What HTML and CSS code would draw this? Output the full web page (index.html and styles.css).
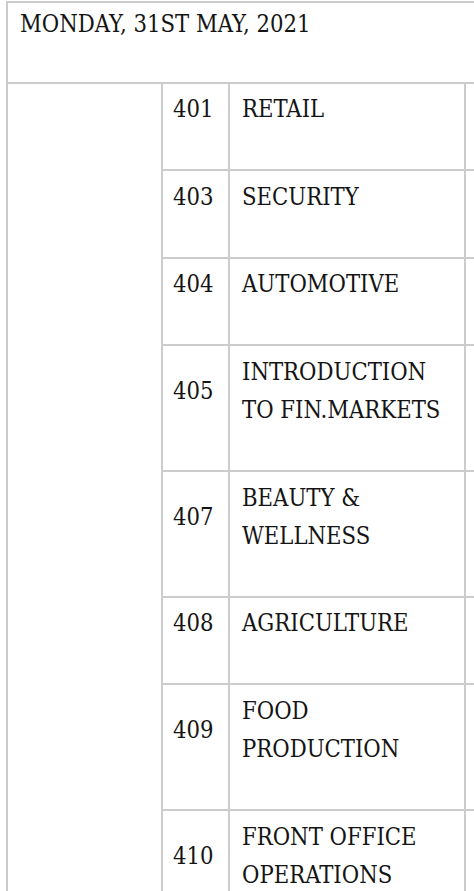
FILE: index.html
```html
<!DOCTYPE html>
<html lang="en">
<head>
<meta charset="utf-8">
<title>Timetable</title>
<link rel="stylesheet" href="styles.css">
</head>
<body>
<div class="wrap">
<table class="tt">
  <colgroup>
    <col class="c-day">
    <col class="c-code">
    <col class="c-name">
    <col class="c-extra">
  </colgroup>
  <tr>
    <td class="head" colspan="4">MONDAY, 31ST MAY, 2021</td>
  </tr>
  <tr>
    <td class="day" rowspan="8"></td>
    <td class="code">401</td>
    <td class="name">RETAIL</td>
    <td class="extra"></td>
  </tr>
  <tr><td class="code">403</td><td class="name">SECURITY</td><td class="extra"></td></tr>
  <tr><td class="code">404</td><td class="name">AUTOMOTIVE</td><td class="extra"></td></tr>
  <tr><td class="code">405</td><td class="name">INTRODUCTION TO FIN.MARKETS</td><td class="extra"></td></tr>
  <tr><td class="code">407</td><td class="name">BEAUTY &amp; WELLNESS</td><td class="extra"></td></tr>
  <tr><td class="code">408</td><td class="name">AGRICULTURE</td><td class="extra"></td></tr>
  <tr><td class="code">409</td><td class="name">FOOD PRODUCTION</td><td class="extra"></td></tr>
  <tr><td class="code">410</td><td class="name">FRONT OFFICE OPERATIONS</td><td class="extra"></td></tr>
</table>
</div>
</body>
</html>
```
FILE: styles.css
```css
html, body {
  margin: 0;
  padding: 0;
  background: #ffffff;
  overflow: hidden;
}
body {
  font-family: "DejaVu Serif Condensed", "DejaVu Serif", serif;
  font-size: 23.6px;
  color: #141414;
}
.wrap {
  padding: 1px 0 0 6px;
  width: 700px;
}
.tt {
  border-collapse: collapse;
  table-layout: fixed;
  width: 560px;
}
.c-day { width: 155px; }
.c-code { width: 67px; }
.c-name { width: 236px; }
.c-extra { width: 100px; }
.tt td {
  border: 2px solid #cccccc;
  line-height: 38.2px;
  padding: 6.8px 8px 40.5px 12px;
  vertical-align: top;
  text-align: left;
}
.tt td.head {
  padding: 2px 14px 38.4px 12px;
}
.tt td.code {
  vertical-align: middle;
  padding-left: 10px;
  padding-right: 4px;
}
```
